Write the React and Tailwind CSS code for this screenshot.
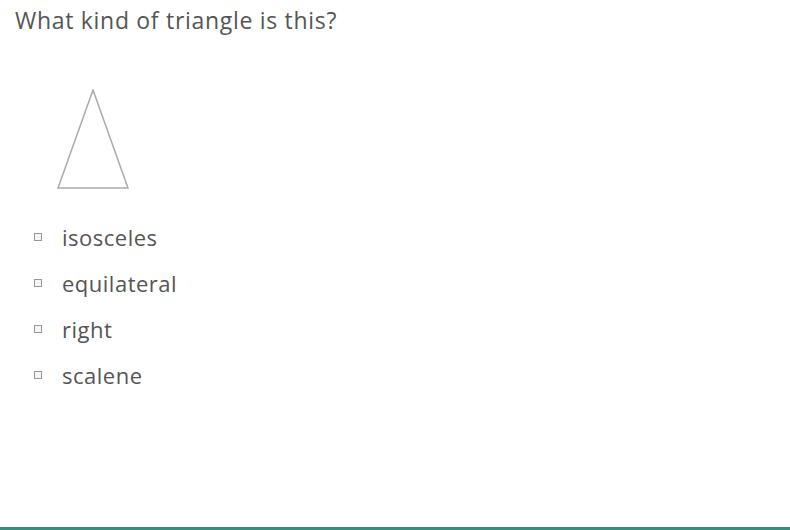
export default function App() {
  const options = ["isosceles", "equilateral", "right", "scalene"];
  return (
    <div className="w-[790px] h-[530px] bg-white flex flex-col font-['Open_Sans',sans-serif] text-[#555]">
      <div className="flex-1 px-[15px] pt-[4px]">
        <h1 className="text-[23px] leading-[32px] font-normal tracking-[0.7px]">What kind of triangle is this?</h1>
        <div className="mt-[53px] ml-[42px]">
          <svg width="74" height="102" viewBox="0 0 74 102">
            <polygon points="36,1 1,99 71,99" fill="none" stroke="#aaa" strokeWidth="1.5" />
          </svg>
        </div>
        <ul className="mt-[35px] flex flex-col gap-[24px]">
          {options.map((o) => (
            <li key={o} className="flex items-center h-[22px]">
              <span className="ml-[19px] w-[8px] h-[8px] border border-[#999] bg-[#f4f4f4]" />
              <span className="ml-[20px] text-[22px] leading-[22px] tracking-[0.5px]">{o}</span>
            </li>
          ))}
        </ul>
      </div>
      <div className="h-[3px] bg-[#3b8c7d]" />
    </div>
  );
}
